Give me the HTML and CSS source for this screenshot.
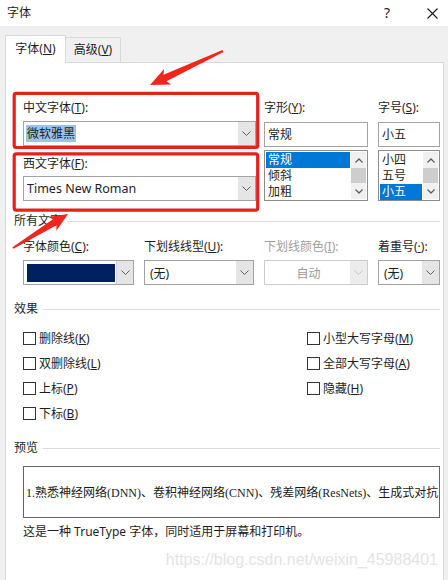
FILE: index.html
```html
<!DOCTYPE html>
<html lang="zh-CN">
<head>
<meta charset="utf-8">
<title>字体</title>
<link rel="stylesheet" href="styles.css">
</head>
<body>
<div class="dialog">
  <div class="titlebar">
    <span class="title">字体</span>
    <span class="help">?</span>
    <span class="close"><svg width="11" height="11" viewBox="0 0 11 11"><path d="M0.5 0.5 L10.5 10.5 M10.5 0.5 L0.5 10.5" stroke="#1a1a1a" stroke-width="1.1" fill="none"/></svg></span>
  </div>
  <div class="tabs">
    <div class="tab active">字体(<u>N</u>)</div>
    <div class="tab">高级(<u>V</u>)</div>
  </div>
  <div class="panel">
    <div class="font-grid">
      <div class="col col-main">
        <div class="lbl">中文字体(<u>T</u>):</div>
        <div class="combo"><span class="val"><span class="sel">微软雅黑</span></span><span class="btn"><svg width="9" height="5" viewBox="0 0 9 5"><path d="M0.5 0.5 L4.5 4.5 L8.5 0.5" stroke="#606060" fill="none"/></svg></span></div>
        <div class="lbl lbl2">西文字体(<u>F</u>):</div>
        <div class="combo combo2"><span class="val">Times New Roman</span><span class="btn"><svg width="9" height="5" viewBox="0 0 9 5"><path d="M0.5 0.5 L4.5 4.5 L8.5 0.5" stroke="#606060" fill="none"/></svg></span></div>
      </div>
      <div class="col col-style">
        <div class="lbl">字形(<u>Y</u>):</div>
        <div class="textbox">常规</div>
        <div class="listbox">
          <ul class="items">
            <li class="selected">常规</li>
            <li>倾斜</li>
            <li>加粗</li>
          </ul>
          <div class="scrollbar">
            <span class="sb-btn"><svg width="8" height="5" viewBox="0 0 8 5"><path d="M0.5 4.5 L4 1 L7.5 4.5" stroke="#606060" stroke-width="1.3" fill="none"/></svg></span>
            <span class="sb-thumb"></span>
            <span class="sb-btn"><svg width="8" height="5" viewBox="0 0 8 5"><path d="M0.5 0.5 L4 4 L7.5 0.5" stroke="#606060" stroke-width="1.3" fill="none"/></svg></span>
          </div>
        </div>
      </div>
      <div class="col col-size">
        <div class="lbl">字号(<u>S</u>):</div>
        <div class="textbox">小五</div>
        <div class="listbox">
          <ul class="items">
            <li>小四</li>
            <li>五号</li>
            <li class="selected">小五</li>
          </ul>
          <div class="scrollbar">
            <span class="sb-btn"><svg width="8" height="5" viewBox="0 0 8 5"><path d="M0.5 4.5 L4 1 L7.5 4.5" stroke="#606060" stroke-width="1.3" fill="none"/></svg></span>
            <span class="sb-thumb"></span>
            <span class="sb-btn"><svg width="8" height="5" viewBox="0 0 8 5"><path d="M0.5 0.5 L4 4 L7.5 0.5" stroke="#606060" stroke-width="1.3" fill="none"/></svg></span>
          </div>
        </div>
      </div>
    </div>

    <div class="sec sec-all">所有文字</div>
    <div class="attr-row">
      <div class="attr attr-color">
        <div class="lbl">字体颜色(<u>C</u>):</div>
        <div class="combo"><span class="val"><span class="swatch"></span></span><span class="btn btn-sep"><svg width="9" height="5" viewBox="0 0 9 5"><path d="M0.5 0.5 L4.5 4.5 L8.5 0.5" stroke="#606060" fill="none"/></svg></span></div>
      </div>
      <div class="attr attr-uline">
        <div class="lbl">下划线线型(<u>U</u>):</div>
        <div class="combo"><span class="val val-pad">(无)</span><span class="btn"><svg width="9" height="5" viewBox="0 0 9 5"><path d="M0.5 0.5 L4.5 4.5 L8.5 0.5" stroke="#606060" fill="none"/></svg></span></div>
      </div>
      <div class="attr attr-ucolor disabled">
        <div class="lbl">下划线颜色(<u>I</u>):</div>
        <div class="combo"><span class="val val-center">自动</span><span class="btn"><svg width="9" height="5" viewBox="0 0 9 5"><path d="M0.5 0.5 L4.5 4.5 L8.5 0.5" stroke="#c4c4c4" fill="none"/></svg></span></div>
      </div>
      <div class="attr attr-emph">
        <div class="lbl">着重号(<u>·</u>):</div>
        <div class="combo"><span class="val val-pad">(无)</span><span class="btn"><svg width="9" height="5" viewBox="0 0 9 5"><path d="M0.5 0.5 L4.5 4.5 L8.5 0.5" stroke="#606060" fill="none"/></svg></span></div>
      </div>
    </div>

    <div class="sec">效果</div>
    <div class="effects">
      <label class="chk"><span class="box"></span>删除线(<u>K</u>)</label>
      <label class="chk"><span class="box"></span>小型大写字母(<u>M</u>)</label>
      <label class="chk"><span class="box"></span>双删除线(<u>L</u>)</label>
      <label class="chk"><span class="box"></span>全部大写字母(<u>A</u>)</label>
      <label class="chk"><span class="box"></span>上标(<u>P</u>)</label>
      <label class="chk"><span class="box"></span>隐藏(<u>H</u>)</label>
      <label class="chk"><span class="box"></span>下标(<u>B</u>)</label>
    </div>

    <div class="sec">预览</div>
    <div class="preview"><span class="preview-text">1.熟悉神经网络(DNN)、卷积神经网络(CNN)、残差网络(ResNets)、生成式对抗</span></div>
    <div class="note">这是一种 TrueType 字体，同时适用于屏幕和打印机。</div>
    <div class="watermark">https://blog.csdn.net/weixin_45988401</div>
  </div>

  <svg class="annotations" width="448" height="580" viewBox="0 0 448 580">
    <rect x="14.2" y="93.3" width="243.5" height="54.2" rx="2" fill="none" stroke="#e3221c" stroke-width="3.2"/>
    <rect x="14.2" y="153.9" width="243.5" height="56.2" rx="2" fill="none" stroke="#e3221c" stroke-width="3.2"/>
    <g transform="translate(223,51) rotate(155)">
      <polygon points="0,-1 64,-3.6 61,-8.5 80.5,0 61,8.5 64,3.6 0,1" fill="#f0261c"/>
    </g>
    <g transform="translate(13,248) rotate(-31.7)">
      <polygon points="0,-1 49,-3.4 46,-8 64.7,0 46,8 49,3.4 0,1" fill="#f0261c"/>
    </g>
  </svg>
</div>
</body>
</html>
```

FILE: styles.css
```css
* {
  box-sizing: border-box;
  margin: 0;
  padding: 0;
}

html, body {
  width: 448px;
  height: 580px;
  overflow: hidden;
}

body {
  background: #f0f0f0;
  font-family: "Noto Sans", "Noto Sans CJK SC", sans-serif;
  font-size: 12px;
  color: #1e1e1e;
}

u {
  text-underline-offset: 1px;
}

.dialog {
  position: relative;
  width: 448px;
  height: 580px;
  display: flex;
  flex-direction: column;
}

/* title bar */
.titlebar {
  height: 26px;
  background: #fff;
  display: flex;
  align-items: center;
  padding: 0 6px 0 7px;
}

.title {
  flex: 1;
  line-height: 16px;
}

.help {
  width: 20px;
  margin-right: 25px;
  text-align: center;
  font-size: 14px;
  line-height: 16px;
}

.close {
  width: 20px;
  display: flex;
  justify-content: center;
}

/* tabs */
.tabs {
  height: 36px;
  display: flex;
  align-items: flex-end;
  padding-left: 5px;
}

.tab {
  height: 25px;
  width: 56px;
  border: 1px solid #d9d9d9;
  border-bottom: none;
  margin-left: -1px;
  text-align: center;
  line-height: 24px;
  background: #f0f0f0;
}

.tab.active {
  position: relative;
  z-index: 1;
  width: 61px;
  height: 28px;
  margin-left: 0;
  margin-bottom: -1px;
  background: #fff;
  line-height: 26px;
}

/* panel */
.panel {
  flex: 1;
  margin: 0 4px 0 5px;
  background: #fff;
  border: 1px solid #d9d9d9;
  border-bottom: none;
}

.lbl {
  height: 16px;
  line-height: 16px;
  white-space: nowrap;
}

.font-grid {
  display: flex;
  margin: 37px 0 0 17px;
}

.col {
  display: flex;
  flex-direction: column;
}

.col-main {
  width: 233px;
  margin-right: 8px;
}

.col-style {
  width: 104px;
  margin-right: 10px;
}

.col-size {
  width: 62px;
}

.combo {
  height: 25px;
  margin-top: 5px;
  border: 1px solid #a3a3a3;
  background: #fff;
  display: flex;
  align-items: stretch;
}

.combo .val {
  flex: 1;
  display: flex;
  align-items: center;
  padding-left: 2px;
  white-space: nowrap;
  overflow: hidden;
}

.combo .btn {
  width: 17px;
  background: #e5e5e5;
  display: flex;
  align-items: center;
  justify-content: center;
}

.combo .btn-sep {
  border-left: 1px solid #d4d4d4;
}

.sel {
  background: #9bc4e9;
  line-height: 17px;
  padding: 0 1px;
}

.combo2 .val {
  padding-left: 3px;
  font-size: 12.5px;
}

.lbl2 {
  margin-top: 10px;
}

.col-main .combo2 {
  margin-top: 4px;
}

.col-main > .combo:first-of-type {
  margin-top: 6px;
}

.textbox {
  height: 25px;
  margin-top: 6px;
  border: 1px solid #a3a3a3;
  padding-left: 3px;
  line-height: 23px;
}

.listbox {
  height: 51px;
  margin-top: 3px;
  border: 1px solid #8c8c8c;
  display: flex;
  padding: 1px;
}

.items {
  flex: 1;
  list-style: none;
  padding-right: 1px;
}

.items li {
  height: 16px;
  line-height: 16px;
  padding-left: 2px;
}

.items li.selected {
  background: #0078d7;
  color: #fff;
}

.scrollbar {
  width: 15px;
  display: flex;
  flex-direction: column;
  background: #f0f0f0;
}

.sb-btn {
  height: 16px;
  display: flex;
  align-items: center;
  justify-content: center;
}

.sb-thumb {
  flex: 1;
  background: #cdcdcd;
}

/* section heads */
.sec {
  display: flex;
  align-items: center;
  height: 16px;
  line-height: 16px;
  margin: 16px 3px 0 8px;
}

.sec::after {
  content: "";
  flex: 1;
  height: 1px;
  background: #dcdcdc;
  margin-left: 5px;
}

.sec-all {
  margin-top: 12px;
}

/* attribute row */
.attr-row {
  display: flex;
  margin: 10px 0 0 17px;
}

.attr {
  display: flex;
  flex-direction: column;
  margin-right: 10px;
}

.attr-color { width: 111px; }
.attr-uline { width: 110px; }
.attr-ucolor { width: 104px; }
.attr-emph { width: 62px; margin-right: 0; }

.val-pad {
  padding-left: 5px !important;
}

.val-center {
  justify-content: center;
}

.swatch {
  display: block;
  width: 88px;
  height: 18px;
  margin-left: 1px;
  background: #00205f;
}

.disabled .lbl {
  color: #a0a0a0;
}

.disabled .combo {
  border-color: #cccccc;
  color: #9a9a9a;
}

.disabled .combo .btn {
  background: #ececec;
}

/* effects */
.effects {
  display: grid;
  grid-template-columns: 284px auto;
  grid-auto-rows: 25px;
  margin: 9px 0 0 17px;
}

.chk {
  display: flex;
  align-items: center;
  white-space: nowrap;
  line-height: 16px;
}

.box {
  width: 13px;
  height: 13px;
  border: 1px solid #333;
  background: #fff;
  margin-right: 3px;
  flex: none;
}

.effects + .sec {
  margin-top: 14px;
}

/* preview */
.preview {
  height: 52px;
  margin: 10px 3px 0 17px;
  border: 1px solid #646464;
  display: flex;
  align-items: center;
  overflow: hidden;
  white-space: nowrap;
  padding-left: 2px;
}

.preview-text {
  font-family: "Liberation Serif", "Noto Sans CJK SC", serif;
  font-size: 12px;
  color: #1a1a1a;
}

.note {
  margin: 6px 0 0 17px;
  line-height: 16px;
}

.watermark {
  margin: 10px 5px 0 0;
  text-align: right;
  font-family: "Liberation Sans", sans-serif;
  font-size: 16px;
  line-height: 20px;
  color: #e4e4e4;
}

/* annotation overlay */
.annotations {
  position: absolute;
  left: 0;
  top: 0;
  pointer-events: none;
}
```
